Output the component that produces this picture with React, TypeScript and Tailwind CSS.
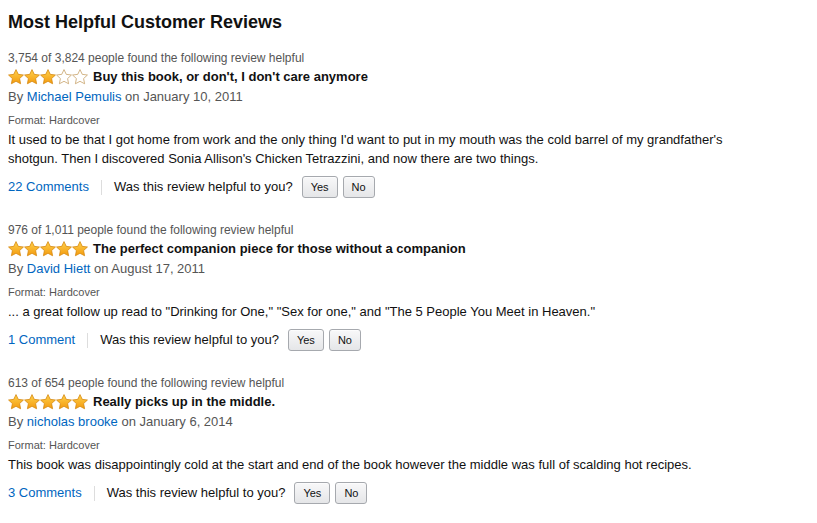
import React from 'react'

interface Review {
  helpful: string
  stars: number
  title: string
  author: string
  date: string
  body: string[]
  comments: string
}

const reviews: Review[] = [
  {
    helpful: '3,754 of 3,824 people found the following review helpful',
    stars: 3,
    title: "Buy this book, or don't, I don't care anymore",
    author: 'Michael Pemulis',
    date: 'January 10, 2011',
    body: [
      "It used to be that I got home from work and the only thing I'd want to put in my mouth was the cold barrel of my grandfather's",
      "shotgun. Then I discovered Sonia Allison's Chicken Tetrazzini, and now there are two things.",
    ],
    comments: '22 Comments',
  },
  {
    helpful: '976 of 1,011 people found the following review helpful',
    stars: 5,
    title: 'The perfect companion piece for those without a companion',
    author: 'David Hiett',
    date: 'August 17, 2011',
    body: ['... a great follow up read to "Drinking for One," "Sex for one," and "The 5 People You Meet in Heaven."'],
    comments: '1 Comment',
  },
  {
    helpful: '613 of 654 people found the following review helpful',
    stars: 5,
    title: 'Really picks up in the middle.',
    author: 'nicholas brooke',
    date: 'January 6, 2014',
    body: ['This book was disappointingly cold at the start and end of the book however the middle was full of scalding hot recipes.'],
    comments: '3 Comments',
  },
]

const STAR = 'M8 0.6l2.25 4.75 5.2 0.65-3.85 3.55 1 5.2L8 12.3l-4.6 2.45 1-5.2L0.55 6l5.2-0.65z'

function Star({ filled }: { filled: boolean }) {
  return (
    <svg width="16" height="16" viewBox="0 0 16 16" className="shrink-0">
      <defs>
        <linearGradient id="starfill" x1="0" y1="0" x2="0" y2="1">
          <stop offset="0" stopColor="#ffd24d" />
          <stop offset="1" stopColor="#f39a0e" />
        </linearGradient>
      </defs>
      <path
        d={STAR}
        fill={filled ? 'url(#starfill)' : '#ffffff'}
        stroke={filled ? '#d68912' : '#c8a26a'}
        strokeWidth="0.8"
        strokeLinejoin="round"
      />
    </svg>
  )
}

function Stars({ n }: { n: number }) {
  return (
    <div className="flex items-center">
      {[0, 1, 2, 3, 4].map(i => <Star key={i} filled={i < n} />)}
    </div>
  )
}

function HelpButton({ label }: { label: string }) {
  return (
    <button className="h-[22px] px-[8px] rounded-[3px] border border-[#a6a9ae] bg-gradient-to-b from-[#f8f8f9] to-[#e5e6e8] text-[11px] text-[#111] leading-none shadow-[0_1px_0_rgba(255,255,255,0.6)_inset]">
      {label}
    </button>
  )
}

function ReviewBlock({ r }: { r: Review }) {
  return (
    <div className="mb-[23px]">
      <div className="h-[18px] leading-[18px] text-[12px] text-[#555]">{r.helpful}</div>
      <div className="h-[20px] flex items-center gap-[5px]">
        <Stars n={r.stars} />
        <span className="text-[13px] font-bold text-[#111] leading-[20px]">{r.title}</span>
      </div>
      <div className="h-[20px] leading-[20px] text-[13px] text-[#555]">
        By <span className="text-[#0066c0]">{r.author}</span> on {r.date}
      </div>
      <div className="mt-[5px] h-[16px] leading-[16px] text-[11px] text-[#555]">Format: Hardcover</div>
      <div className="mt-[2px] text-[13px] leading-[19px] text-[#111]">
        {r.body.map((line, i) => <div key={i}>{line}</div>)}
      </div>
      <div className="mt-[8px] h-[22px] flex items-center text-[13px]">
        <span className="text-[#0066c0]">{r.comments}</span>
        <span className="mx-[12px] w-px h-[15px] bg-[#ddd]" />
        <span className="text-[#111]">Was this review helpful to you?</span>
        <div className="ml-[9px] flex gap-[5px]">
          <HelpButton label="Yes" />
          <HelpButton label="No" />
        </div>
      </div>
    </div>
  )
}

export default function App() {
  return (
    <div className="w-[817px] h-[523px] overflow-hidden bg-white flex flex-col font-['Liberation_Sans',Arial,sans-serif]">
      <div className="px-[8px] pt-[11px]">
        <h2 className="h-[22px] leading-[22px] text-[18px] font-bold text-[#111] mb-[16px]">Most Helpful Customer Reviews</h2>
        {reviews.map((r, i) => <ReviewBlock key={i} r={r} />)}
      </div>
      <div className="flex-1 bg-gradient-to-b from-white to-[#f4f4f4]" />
    </div>
  )
}
